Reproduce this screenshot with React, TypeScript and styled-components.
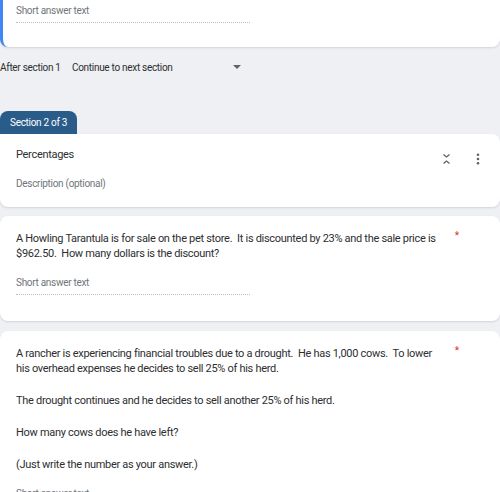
import React from "react";
import styled, { createGlobalStyle } from "styled-components";

const GlobalStyle = createGlobalStyle`
  html, body {
    margin: 0;
    padding: 0;
    background: #eef0f3;
    font-family: Roboto, "Noto Sans", Arial, sans-serif;
  }
`;

const Page = styled.div`
  width: 500px;
  height: 492px;
  overflow: hidden;
  display: flex;
  flex-direction: column;
  background: #eef0f3;
  & > * {
    flex-shrink: 0;
  }
`;

const Card = styled.div<{ $accent?: boolean; $top?: boolean }>`
  background: #fff;
  border-radius: ${(p) => (p.$top ? "0 0 8px 8px" : "8px")};
  border-left: ${(p) => (p.$accent ? "3px solid #4285f4" : "none")};
  box-shadow: 0 1px 2px rgba(60, 64, 67, 0.16);
  padding: 0 40px 0 ${(p) => (p.$accent ? "13px" : "16px")};
  position: relative;
  box-sizing: border-box;
`;

const TopCard = styled(Card)`
  height: 47px;
  padding-top: 5px;
`;

const AnswerField = styled.div<{ $gap?: number }>`
  width: 234px;
  font-size: 10px;
  line-height: 12px;
  letter-spacing: -0.3px;
  color: #70757a;
  padding-bottom: 5px;
  border-bottom: 1px dotted #bdc1c6;
  margin-top: ${(p) => p.$gap ?? 0}px;
`;

const NavRow = styled.div`
  display: flex;
  align-items: center;
  height: 40px;
  font-size: 10px;
  letter-spacing: -0.3px;
  color: #2d2e30;
`;

const NavLabel = styled.span`
  width: 72px;
`;

const Select = styled.div`
  width: 169px;
  display: flex;
  align-items: center;
  justify-content: space-between;
`;

const Caret = styled.span`
  width: 0;
  height: 0;
  border-left: 4px solid transparent;
  border-right: 4px solid transparent;
  border-top: 4px solid #5f6368;
`;

const TabRow = styled.div`
  margin-top: 24px;
  display: flex;
`;

const Tab = styled.div`
  background: #2a5c8a;
  color: #fff;
  font-size: 10px;
  letter-spacing: -0.3px;
  height: 23px;
  padding: 0 10px;
  display: flex;
  align-items: center;
  border-radius: 8px 8px 0 0;
`;

const SectionCard = styled(Card)`
  border-top-left-radius: 0;
  height: 73px;
  padding-top: 14px;
`;

const SectionTitle = styled.div`
  font-size: 11px;
  line-height: 14px;
  letter-spacing: -0.3px;
  color: #2d2e30;
`;

const Description = styled.div`
  font-size: 10px;
  line-height: 12px;
  letter-spacing: -0.3px;
  color: #70757a;
  margin-top: 16px;
`;

const Tools = styled.div`
  position: absolute;
  right: 20px;
  top: 19px;
  display: flex;
  align-items: center;
  gap: 25px;
`;

const QuestionCard = styled(Card)<{ $mt: number }>`
  margin-top: ${(p) => p.$mt}px;
  padding-top: 15px;
  padding-bottom: 26px;
`;

const Question = styled.div`
  font-size: 11px;
  line-height: 15px;
  letter-spacing: -0.3px;
  color: #2d2e30;
  max-width: 428px;
`;

const Para = styled.p`
  margin: 0 0 17px;
  &:last-child {
    margin-bottom: 0;
  }
`;

const Required = styled.span`
  position: absolute;
  right: 41px;
  top: 14px;
  color: #d93025;
  font-size: 10px;
`;

const CollapseIcon = () => (
  <svg width="9" height="12" viewBox="0 0 9 12">
    <path d="M1.5 1.5 L4.5 4 L7.5 1.5" fill="none" stroke="#5f6368" strokeWidth="1.3" />
    <path d="M1.5 10.5 L4.5 8 L7.5 10.5" fill="none" stroke="#5f6368" strokeWidth="1.3" />
  </svg>
);

const MoreIcon = () => (
  <svg width="4" height="12" viewBox="0 0 4 12">
    <circle cx="2" cy="1.8" r="1.3" fill="#5f6368" />
    <circle cx="2" cy="6" r="1.3" fill="#5f6368" />
    <circle cx="2" cy="10.2" r="1.3" fill="#5f6368" />
  </svg>
);

export default function App() {
  return (
    <Page>
      <GlobalStyle />
      <TopCard $accent $top>
        <AnswerField>Short answer text</AnswerField>
      </TopCard>

      <NavRow>
        <NavLabel>After section 1</NavLabel>
        <Select>
          <span>Continue to next section</span>
          <Caret />
        </Select>
      </NavRow>

      <TabRow>
        <Tab>Section 2 of 3</Tab>
      </TabRow>
      <SectionCard>
        <SectionTitle>Percentages</SectionTitle>
        <Description>Description (optional)</Description>
        <Tools>
          <CollapseIcon />
          <MoreIcon />
        </Tools>
      </SectionCard>

      <QuestionCard $mt={9}>
        <Question>
          A Howling Tarantula is for sale on the pet store.&nbsp; It is discounted by 23% and the
          sale price is $962.50.&nbsp; How many dollars is the discount?
        </Question>
        <Required>*</Required>
        <AnswerField $gap={16}>Short answer text</AnswerField>
      </QuestionCard>

      <QuestionCard $mt={10}>
        <Question>
          <Para>
            A rancher is experiencing financial troubles due to a drought.&nbsp; He has 1,000
            cows.&nbsp; To lower his overhead expenses he decides to sell 25% of his herd.
          </Para>
          <Para>The drought continues and he decides to sell another 25% of his herd.</Para>
          <Para>How many cows does he have left?</Para>
          <Para>(Just write the number as your answer.)</Para>
        </Question>
        <Required>*</Required>
        <AnswerField $gap={16}>Short answer text</AnswerField>
      </QuestionCard>
    </Page>
  );
}
